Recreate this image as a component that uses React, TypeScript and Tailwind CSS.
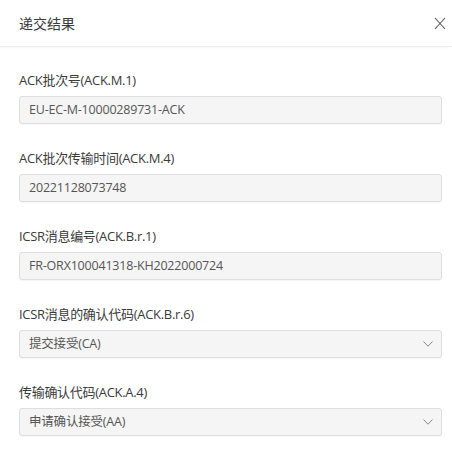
const fields = [
  { label: 'ACK批次号(ACK.M.1)', value: 'EU-EC-M-10000289731-ACK', select: false },
  { label: 'ACK批次传输时间(ACK.M.4)', value: '20221128073748', select: false },
  { label: 'ICSR消息编号(ACK.B.r.1)', value: 'FR-ORX100041318-KH2022000724', select: false },
  { label: 'ICSR消息的确认代码(ACK.B.r.6)', value: '提交接受(CA)', select: true },
  { label: '传输确认代码(ACK.A.4)', value: '申请确认接受(AA)', select: true },
]

export default function App() {
  return (
    <div
      className="h-[452px] w-[452px] overflow-hidden bg-white text-[#333]"
      style={{ fontFamily: '"Open Sans", "Noto Sans CJK SC", sans-serif' }}
    >
      {/* Header */}
      <div className="flex h-[47px] items-center justify-between border-b border-[#ececec] pl-[19px] pr-[6px] shadow-[0_1px_2px_rgba(0,0,0,0.03)]">
        <h2 className="text-[14px] text-[#3a3a3a]">递交结果</h2>
        <button className="text-[#555]" aria-label="Close">
          <svg width="12" height="13" viewBox="0 0 12 13" fill="none" stroke="currentColor" strokeWidth="1.1">
            <path d="M1 1 11 12" />
            <path d="M11 1 1 12" />
          </svg>
        </button>
      </div>

      {/* Form */}
      <div className="flex flex-col gap-[24px] pl-[19px] pr-[10px] pt-[23px]">
        {fields.map((f) => (
          <div key={f.label} className="flex flex-col gap-[6px]">
            <label className="h-[20px] text-[13px] leading-[20px] tracking-[-0.3px] text-[#3a3a3a]">
              {f.label}
            </label>
            <div className="flex h-[28px] items-center justify-between rounded-[3px] border border-[#dedede] bg-[#f5f5f5] pl-[9px] pr-[8px] shadow-[0_1px_1px_rgba(0,0,0,0.04)]">
              <span className="text-[12.5px] tracking-[-0.2px] text-[#555]">{f.value}</span>
              {f.select && (
                <svg width="10" height="6" viewBox="0 0 10 6" fill="none" stroke="#888" strokeWidth="1">
                  <path d="M0.5 0.5 5 5.2 9.5 0.5" />
                </svg>
              )}
            </div>
          </div>
        ))}
      </div>
    </div>
  )
}
